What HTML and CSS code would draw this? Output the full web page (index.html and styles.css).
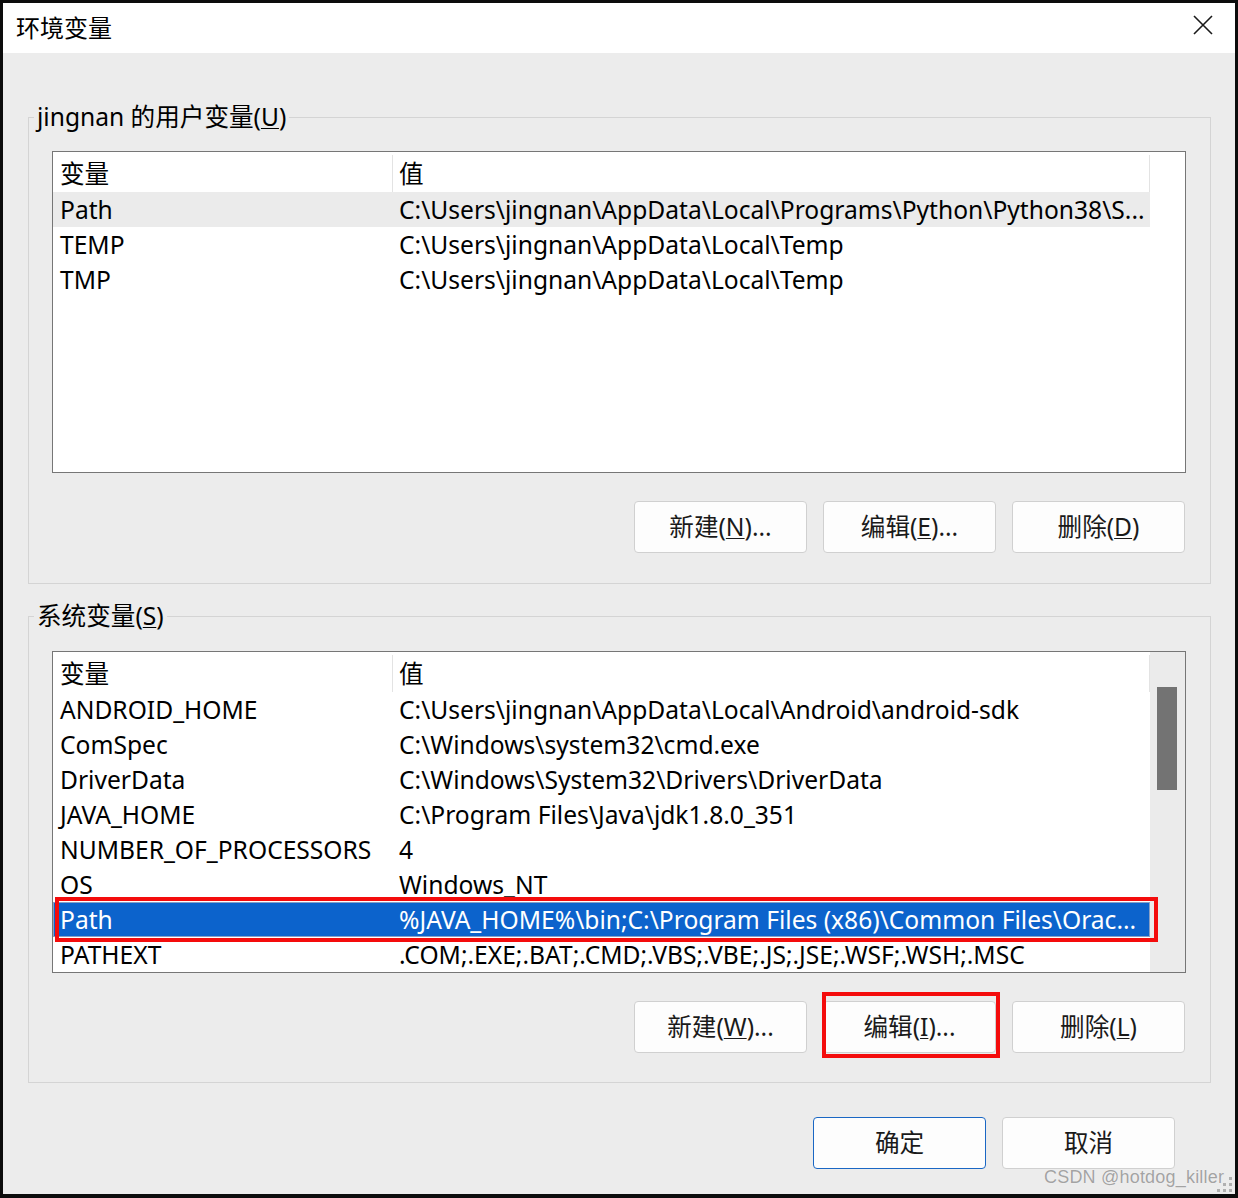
FILE: index.html
```html
<!DOCTYPE html>
<html lang="zh-CN">
<head>
<meta charset="utf-8">
<title>环境变量</title>
<link rel="stylesheet" href="styles.css">
</head>
<body>
<div class="window">
  <div class="titlebar">
    <span class="title">环境变量</span>
    <svg class="close" width="20" height="20" viewBox="0 0 20 20"><path d="M1 1 L19 19 M19 1 L1 19" stroke="#1a1a1a" stroke-width="1.6" fill="none"/></svg>
  </div>
  <div class="content">
    <fieldset class="group group-user">
      <legend>jingnan 的用户变量(<u>U</u>)</legend>
      <div class="listbox">
        <div class="list-main">
          <div class="list-head"><div class="cell name">变量</div><div class="cell val">值</div></div>
          <div class="row hot"><div class="cell name">Path</div><div class="cell val">C:\Users\jingnan\AppData\Local\Programs\Python\Python38\S...</div></div>
          <div class="row"><div class="cell name">TEMP</div><div class="cell val">C:\Users\jingnan\AppData\Local\Temp</div></div>
          <div class="row"><div class="cell name">TMP</div><div class="cell val">C:\Users\jingnan\AppData\Local\Temp</div></div>
        </div>
      </div>
      <div class="btns">
        <button class="btn">新建(<u>N</u>)...</button>
        <button class="btn">编辑(<u>E</u>)...</button>
        <button class="btn">删除(<u>D</u>)</button>
      </div>
    </fieldset>

    <fieldset class="group group-sys">
      <legend>系统变量(<u>S</u>)</legend>
      <div class="listbox">
        <div class="list-main">
          <div class="list-head"><div class="cell name">变量</div><div class="cell val">值</div></div>
          <div class="row"><div class="cell name">ANDROID_HOME</div><div class="cell val">C:\Users\jingnan\AppData\Local\Android\android-sdk</div></div>
          <div class="row"><div class="cell name">ComSpec</div><div class="cell val">C:\Windows\system32\cmd.exe</div></div>
          <div class="row"><div class="cell name">DriverData</div><div class="cell val">C:\Windows\System32\Drivers\DriverData</div></div>
          <div class="row"><div class="cell name">JAVA_HOME</div><div class="cell val">C:\Program Files\Java\jdk1.8.0_351</div></div>
          <div class="row"><div class="cell name">NUMBER_OF_PROCESSORS</div><div class="cell val">4</div></div>
          <div class="row"><div class="cell name">OS</div><div class="cell val">Windows_NT</div></div>
          <div class="row selected"><div class="cell name">Path</div><div class="cell val">%JAVA_HOME%\bin;C:\Program Files (x86)\Common Files\Orac...</div></div>
          <div class="row"><div class="cell name">PATHEXT</div><div class="cell val">.COM;.EXE;.BAT;.CMD;.VBS;.VBE;.JS;.JSE;.WSF;.WSH;.MSC</div></div>
        </div>
        <div class="scrollbar"><div class="thumb"></div></div>
      </div>
      <div class="btns">
        <button class="btn">新建(<u>W</u>)...</button>
        <button class="btn">编辑(<u>I</u>)...</button>
        <button class="btn">删除(<u>L</u>)</button>
      </div>
    </fieldset>

    <div class="dialog-btns">
      <button class="btn default">确定</button>
      <button class="btn">取消</button>
    </div>
  </div>
</div>

<div class="mark mark-row"></div>
<div class="mark mark-btn"></div>
<div class="watermark">CSDN @hotdog_killer</div>
<svg class="grip" width="16" height="16" viewBox="0 0 16 16">
  <rect x="12" y="0" width="3" height="3" fill="#b0b0b0"/>
  <rect x="6" y="6" width="3" height="3" fill="#b0b0b0"/>
  <rect x="12" y="6" width="3" height="3" fill="#b0b0b0"/>
  <rect x="0" y="12" width="3" height="3" fill="#b0b0b0"/>
  <rect x="6" y="12" width="3" height="3" fill="#b0b0b0"/>
  <rect x="12" y="12" width="3" height="3" fill="#b0b0b0"/>
</svg>
</body>
</html>
```
FILE: styles.css
```css
html, body {
  margin: 0;
  padding: 0;
  background: #0c0c0c;
}
body {
  width: 1238px;
  height: 1198px;
  overflow: hidden;
  font-family: "Noto Sans", "Noto Sans CJK SC", sans-serif;
  font-size: 24.6px;
  color: #000;
}
.window {
  width: 1238px;
  height: 1198px;
  box-sizing: border-box;
  border: 3px solid #0c0c0c;
  border-bottom-width: 4px;
  background: #ececec;
  display: flex;
  flex-direction: column;
}
.titlebar {
  height: 50px;
  background: #ffffff;
  display: flex;
  justify-content: space-between;
  align-items: flex-start;
  padding: 0 22px 0 13px;
}
.title {
  font-family: "Noto Sans CJK SC", sans-serif;
  font-size: 24px;
  line-height: 47px;
  color: #000;
}
.close {
  margin-top: 12px;
}
.content {
  display: flex;
  flex-direction: column;
}
.group {
  margin: 0 24px 0 25px;
  border: 1px solid #d4d4d4;
  padding: 0 24px 0 23px;
  min-width: 0;
}
.group legend {
  font-family: "Noto Sans", "Noto Sans CJK SC", sans-serif;
  line-height: 30px;
  height: 30px;
  padding: 0 3px;
  margin-left: -18px;
  color: #000;
}
.group-user {
  margin-top: 49px;
  padding-top: 19px;
  padding-bottom: 30px;
}
.group-sys {
  margin-top: 17px;
  padding-top: 20px;
  padding-bottom: 29px;
}
u {
  text-decoration-thickness: 1px;
  text-underline-offset: 2px;
}
.listbox {
  width: 1134px;
  height: 322px;
  box-sizing: border-box;
  border: 1px solid #767676;
  background: #ffffff;
  display: flex;
  overflow: hidden;
}
.list-main {
  width: 1097px;
  flex: none;
}
.list-head {
  display: flex;
  height: 40px;
  box-sizing: border-box;
  padding-top: 3px;
  line-height: 37px;
}
.list-head .cell {
  box-sizing: border-box;
  border-right: 1px solid #e3e3e3;
}
.row {
  display: flex;
  height: 35px;
  line-height: 35px;
}
.cell {
  white-space: nowrap;
  overflow: hidden;
}
.cell.name {
  width: 340px;
  flex: none;
  padding-left: 7px;
  box-sizing: border-box;
}
.cell.val {
  flex: 1;
  padding-left: 6px;
}
.row.hot {
  background: #ebebeb;
}
.row.selected {
  background: #0c63cc;
  color: #ffffff;
  box-shadow: inset 0 0 0 1px #8a9fc4;
}
.scrollbar {
  width: 35px;
  flex: none;
  background: #ebebeb;
  padding: 35px 0 0 7px;
  box-sizing: border-box;
}
.thumb {
  width: 20px;
  height: 103px;
  background: #737373;
}
.btns {
  display: flex;
  justify-content: flex-end;
  gap: 16px;
  margin-top: 28px;
  padding-right: 1px;
}
.btn {
  width: 173px;
  height: 52px;
  box-sizing: border-box;
  border: 1px solid #d0d0d0;
  border-radius: 4px;
  background: #fdfdfd;
  font-family: "Noto Sans", "Noto Sans CJK SC", sans-serif;
  font-size: 24.6px;
  color: #1a1a1a;
  padding: 0;
  line-height: 48px;
}
.btn.default {
  border-color: #1a67c4;
}
.dialog-btns {
  display: flex;
  justify-content: flex-end;
  gap: 16px;
  margin-top: 34px;
  padding-right: 60px;
}
.mark {
  position: absolute;
  border: 4px solid #f40c0c;
  box-sizing: border-box;
}
.mark-row {
  left: 55px;
  top: 897px;
  width: 1103px;
  height: 45px;
}
.mark-btn {
  left: 822px;
  top: 992px;
  width: 178px;
  height: 66px;
}
.watermark {
  position: absolute;
  left: 1044px;
  top: 1167px;
  font-family: "Liberation Sans", sans-serif;
  font-size: 18px;
  color: #a3a3a3;
  text-shadow: 0 0 1px #ffffff;
  letter-spacing: 0.2px;
}
.grip {
  position: absolute;
  left: 1217px;
  top: 1177px;
}
```
